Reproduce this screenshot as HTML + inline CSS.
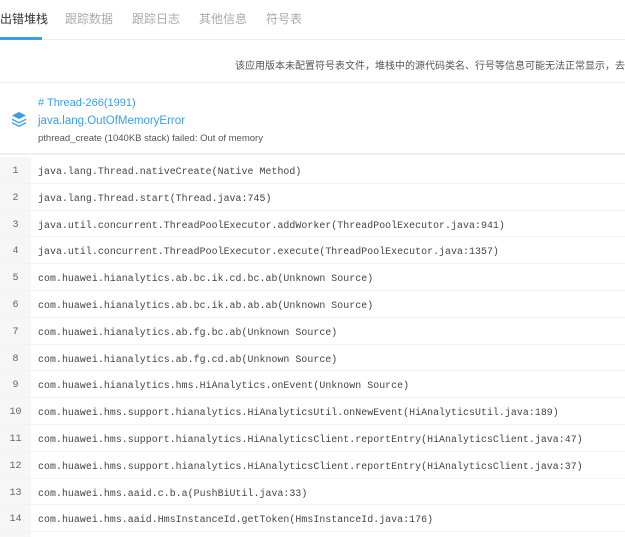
<!DOCTYPE html>
<html><head><meta charset="utf-8"><style>
*{margin:0;padding:0;box-sizing:border-box}
body{width:625px;height:533px;overflow:hidden;background:#fff;font-family:"Liberation Sans","Noto Sans CJK SC",sans-serif;position:relative}
.tabs{position:absolute;top:0;left:0;width:625px;height:40px;border-bottom:1px solid #eee}
.tab{position:absolute;top:10px;font-size:12px;color:#aaa}
.ul{position:absolute;left:0;top:37px;width:42px;height:3px;background:#3a9ee8}
.notice{position:absolute;left:235px;top:57px;font-size:10px;color:#555;white-space:nowrap}
.hr{position:absolute;left:0;top:82px;width:625px;height:1px;background:#eee}
.box{position:absolute;left:0;top:83px;width:625px;height:72px;border-bottom:2px solid #f0f0f0}
.t1{position:absolute;left:38px;top:97px;font-size:11px;color:#3a9ee8}
.t2{position:absolute;left:38px;top:115px;font-size:11.5px;color:#3a9ee8}
.t3{position:absolute;left:38px;top:133px;font-size:9.5px;color:#555}
.gut{position:absolute;left:0;top:157px;width:31px;height:380px;background:#f6f6f6}
.row{position:absolute;left:0;width:625px;height:26.8px;border-bottom:1px solid #f2f2f2}
.n{position:absolute;left:0;width:31px;text-align:center;top:9px;font-family:"Liberation Mono",monospace;font-size:10px;color:#666}
.c{position:absolute;left:38px;top:9px;font-family:"Liberation Mono",monospace;font-size:9.9px;letter-spacing:0.06px;color:#444;white-space:nowrap}
</style></head><body>
<div class="tabs">
<div class="tab" style="left:0;color:#333">出错堆栈</div>
<div class="tab" style="left:65px">跟踪数据</div>
<div class="tab" style="left:132px">跟踪日志</div>
<div class="tab" style="left:199px">其他信息</div>
<div class="tab" style="left:266px">符号表</div>
<div class="ul"></div>
</div>
<div class="notice">该应用版本未配置符号表文件，堆栈中的源代码类名、行号等信息可能无法正常显示，去</div>
<div class="hr"></div>
<div class="box"></div>
<svg style="position:absolute;left:11px;top:112px" width="16" height="15" viewBox="0 0 16 15"><path d="M8 0L15 3.5 8 7 1 3.5Z" fill="#3a9ee8"/><path d="M1 6.5L8 10 15 6.5 15 8 8 11.5 1 8Z" fill="#3a9ee8"/><path d="M1 10L8 13.5 15 10 15 11.5 8 15 1 11.5Z" fill="#3a9ee8"/></svg>
<div class="t1"># Thread-266(1991)</div>
<div class="t2">java.lang.OutOfMemoryError</div>
<div class="t3">pthread_create (1040KB stack) failed: Out of memory</div>
<div class="gut"></div>
<div class="row" style="top:157px"><span class="n">1</span><span class="c">java.lang.Thread.nativeCreate(Native Method)</span></div>
<div class="row" style="top:183.8px"><span class="n">2</span><span class="c">java.lang.Thread.start(Thread.java:745)</span></div>
<div class="row" style="top:210.6px"><span class="n">3</span><span class="c">java.util.concurrent.ThreadPoolExecutor.addWorker(ThreadPoolExecutor.java:941)</span></div>
<div class="row" style="top:237.4px"><span class="n">4</span><span class="c">java.util.concurrent.ThreadPoolExecutor.execute(ThreadPoolExecutor.java:1357)</span></div>
<div class="row" style="top:264.2px"><span class="n">5</span><span class="c">com.huawei.hianalytics.ab.bc.ik.cd.bc.ab(Unknown Source)</span></div>
<div class="row" style="top:291px"><span class="n">6</span><span class="c">com.huawei.hianalytics.ab.bc.ik.ab.ab.ab(Unknown Source)</span></div>
<div class="row" style="top:317.8px"><span class="n">7</span><span class="c">com.huawei.hianalytics.ab.fg.bc.ab(Unknown Source)</span></div>
<div class="row" style="top:344.6px"><span class="n">8</span><span class="c">com.huawei.hianalytics.ab.fg.cd.ab(Unknown Source)</span></div>
<div class="row" style="top:371.4px"><span class="n">9</span><span class="c">com.huawei.hianalytics.hms.HiAnalytics.onEvent(Unknown Source)</span></div>
<div class="row" style="top:398.2px"><span class="n">10</span><span class="c">com.huawei.hms.support.hianalytics.HiAnalyticsUtil.onNewEvent(HiAnalyticsUtil.java:189)</span></div>
<div class="row" style="top:425px"><span class="n">11</span><span class="c">com.huawei.hms.support.hianalytics.HiAnalyticsClient.reportEntry(HiAnalyticsClient.java:47)</span></div>
<div class="row" style="top:451.8px"><span class="n">12</span><span class="c">com.huawei.hms.support.hianalytics.HiAnalyticsClient.reportEntry(HiAnalyticsClient.java:37)</span></div>
<div class="row" style="top:478.6px"><span class="n">13</span><span class="c">com.huawei.hms.aaid.c.b.a(PushBiUtil.java:33)</span></div>
<div class="row" style="top:505.4px"><span class="n">14</span><span class="c">com.huawei.hms.aaid.HmsInstanceId.getToken(HmsInstanceId.java:176)</span></div>
</body></html>
